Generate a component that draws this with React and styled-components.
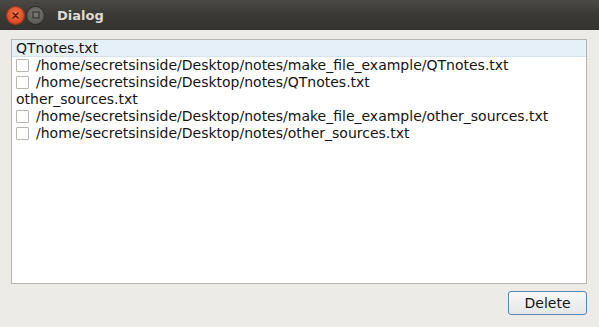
import React from 'react';
import styled, { createGlobalStyle } from 'styled-components';

const GlobalStyle = createGlobalStyle`
  html, body {
    margin: 0;
    padding: 0;
    background: #edebe7;
  }
  * { box-sizing: border-box; }
`;

const Window = styled.div`
  display: flex;
  flex-direction: column;
  width: 599px;
  height: 327px;
  background: #edebe7;
  font-family: 'DejaVu Sans', 'Open Sans', sans-serif;
  color: #141414;
  overflow: hidden;
`;

const TitleBar = styled.div`
  display: flex;
  align-items: center;
  height: 30px;
  padding-left: 7px;
  background: linear-gradient(#4a4944, #3a3935 50%, #343330);
  flex-shrink: 0;
`;

const WinButton = styled.div`
  width: 17px;
  height: 17px;
  border-radius: 50%;
  margin-right: 3px;
  display: flex;
  align-items: center;
  justify-content: center;
  background: ${p => (p.$close ? 'radial-gradient(circle at 50% 40%, #f27a50, #e0461f 70%)' : 'radial-gradient(circle at 50% 40%, #7d7b76, #5c5b57 70%)')};
  box-shadow: 0 0 0 1px ${p => (p.$close ? '#a8361a' : '#2e2d2a')};
`;

const Title = styled.span`
  margin-left: 10px;
  font-weight: bold;
  font-size: 13px;
  color: #dfdbd2;
`;

const Body = styled.div`
  flex: 1;
  display: flex;
  flex-direction: column;
  padding: 9px 12px 12px 11px;
`;

const ListBox = styled.div`
  flex: 1;
  background: #fff;
  border: 1px solid #b7b4ae;
`;

const Row = styled.div`
  display: flex;
  align-items: center;
  height: 17px;
  padding-left: 4px;
  font-size: 14px;
  white-space: nowrap;
  background: ${p => (p.$selected ? '#e6f0f9' : 'transparent')};
  border-bottom: ${p => (p.$selected ? '1px solid #d6e3ef' : '1px solid transparent')};
`;

const Check = styled.span`
  width: 13px;
  height: 13px;
  border: 1px solid #b9b6b0;
  border-radius: 1px;
  background: #fff;
  margin-right: 7px;
  flex-shrink: 0;
`;

const Footer = styled.div`
  display: flex;
  justify-content: flex-end;
  padding-top: 7px;
`;

const Button = styled.button`
  width: 79px;
  height: 24px;
  border: 1px solid #5c86ae;
  border-radius: 3px;
  background: linear-gradient(#f8f8f7, #e4e6e8);
  font-family: inherit;
  font-size: 14px;
  color: #141414;
  padding: 0;
`;

const groups = [
  {
    name: 'QTnotes.txt',
    files: [
      '/home/secretsinside/Desktop/notes/make_file_example/QTnotes.txt',
      '/home/secretsinside/Desktop/notes/QTnotes.txt',
    ],
  },
  {
    name: 'other_sources.txt',
    files: [
      '/home/secretsinside/Desktop/notes/make_file_example/other_sources.txt',
      '/home/secretsinside/Desktop/notes/other_sources.txt',
    ],
  },
];

export default function App() {
  return (
    <>
      <GlobalStyle />
      <Window>
        <TitleBar>
          <WinButton $close>
            <svg width="7" height="7" viewBox="0 0 7 7">
              <path d="M1 1L6 6M6 1L1 6" stroke="#4a1a0c" strokeWidth="1.4" strokeLinecap="round" />
            </svg>
          </WinButton>
          <WinButton>
            <svg width="8" height="8" viewBox="0 0 8 8">
              <rect x="1" y="1" width="6" height="6" fill="none" stroke="#3a3936" strokeWidth="1.3" />
            </svg>
          </WinButton>
          <Title>Dialog</Title>
        </TitleBar>
        <Body>
          <ListBox>
            {groups.map((g, gi) => (
              <React.Fragment key={g.name}>
                <Row $selected={gi === 0}>{g.name}</Row>
                {g.files.map(f => (
                  <Row key={f}>
                    <Check />
                    {f}
                  </Row>
                ))}
              </React.Fragment>
            ))}
          </ListBox>
          <Footer>
            <Button>Delete</Button>
          </Footer>
        </Body>
      </Window>
    </>
  );
}
